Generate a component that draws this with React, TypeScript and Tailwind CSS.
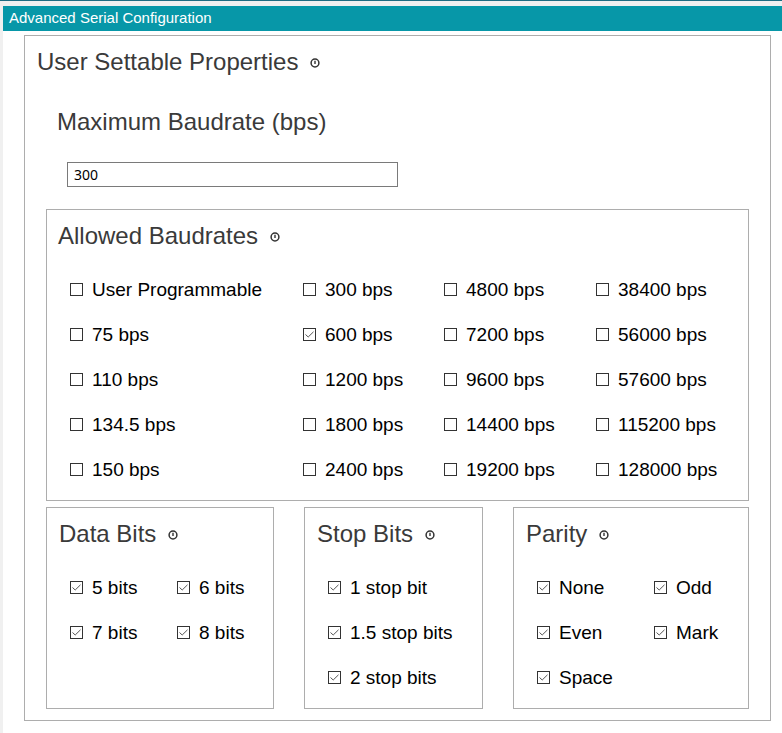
const sans = "font-['Liberation_Sans',Arial,sans-serif]";

function InfoIcon() {
  return (
    <svg width="10" height="10" viewBox="0 0 10 10" className="ml-3 inline-block shrink-0 translate-y-[1px]">
      <circle cx="5" cy="5" r="3.9" fill="none" stroke="#333" strokeWidth="1.5" />
      <line x1="5" y1="2.8" x2="5" y2="6" stroke="#333" strokeWidth="1.4" />
    </svg>
  );
}

function Heading({ text }: { text: string }) {
  return (
    <div className="flex h-[28px] items-center text-[24px] leading-[28px] text-[#3a3a3a]">
      <span>{text}</span>
      <InfoIcon />
    </div>
  );
}

function Check({ label, checked }: { label: string; checked?: boolean }) {
  return (
    <label className="flex h-[45px] items-center gap-[9px] text-[19px] leading-[22px] text-black">
      <span className="flex h-[13px] w-[13px] shrink-0 items-center justify-center border border-[#333] bg-white">
        {checked && (
          <svg width="11" height="11" viewBox="0 0 11 11">
            <path d="M1.5 5.5 L4.2 8 L9.5 2.8" fill="none" stroke="#555" strokeWidth="1" />
          </svg>
        )}
      </span>
      <span>{label}</span>
    </label>
  );
}

const baudCols = [
  ["User Programmable", "75 bps", "110 bps", "134.5 bps", "150 bps"],
  ["300 bps", "600 bps", "1200 bps", "1800 bps", "2400 bps"],
  ["4800 bps", "7200 bps", "9600 bps", "14400 bps", "19200 bps"],
  ["38400 bps", "56000 bps", "57600 bps", "115200 bps", "128000 bps"],
];

export default function App() {
  return (
    <div className={`flex h-[733px] w-[782px] flex-col bg-[#f0f0f0] ${sans}`}>
      <div className="h-px bg-[#1d6c82]" />
      <div className="h-[5px]" />
      <div className="ml-[3px] flex h-[25px] items-center bg-[#0797a8] pl-[6px] text-[15px] text-white">
        Advanced Serial Configuration
      </div>
      <div className="ml-[3px] flex-1 bg-white pl-[21px] pr-[11px] pt-[4px]">
        <div className="h-[686px] border border-[#adadad]">
          <div className="ml-[12px] mt-[12px]">
            <Heading text="User Settable Properties" />
          </div>
          <div className="ml-[32px] mt-[32px] h-[28px] text-[24px] leading-[28px] text-[#3a3a3a]">
            Maximum Baudrate (bps)
          </div>
          <div className="ml-[42px] mt-[26px] flex h-[25px] w-[331px] items-center border border-[#7a7a7a] px-[6px] font-['Noto_Sans',sans-serif] text-[14px] text-black">
            300
          </div>

          <div className="ml-[21px] mt-[22px] w-[703px] border border-[#adadad] pb-[8px] pl-[11px] pt-[12px]">
            <Heading text="Allowed Baudrates" />
            <div className="mt-[17px] grid grid-cols-[233px_141px_152px_1fr] pl-[12px]">
              {baudCols.map((col, ci) => (
                <div key={ci} className="flex flex-col">
                  {col.map((b) => (
                    <Check key={b} label={b} checked={b === "600 bps"} />
                  ))}
                </div>
              ))}
            </div>
          </div>

          <div className="ml-[21px] mt-[6px] flex gap-[30px]">
            <div className="h-[202px] w-[228px] border border-[#adadad] pl-[12px] pt-[12px]">
              <Heading text="Data Bits" />
              <div className="mt-[17px] grid grid-cols-[107px_1fr] pl-[11px]">
                <Check label="5 bits" checked />
                <Check label="6 bits" checked />
                <Check label="7 bits" checked />
                <Check label="8 bits" checked />
              </div>
            </div>
            <div className="h-[202px] w-[179px] border border-[#adadad] pl-[12px] pt-[12px]">
              <Heading text="Stop Bits" />
              <div className="mt-[17px] flex flex-col pl-[11px]">
                <Check label="1 stop bit" checked />
                <Check label="1.5 stop bits" checked />
                <Check label="2 stop bits" checked />
              </div>
            </div>
            <div className="h-[202px] w-[236px] border border-[#adadad] pl-[12px] pt-[12px]">
              <Heading text="Parity" />
              <div className="mt-[17px] grid grid-cols-[117px_1fr] pl-[11px]">
                <Check label="None" checked />
                <Check label="Odd" checked />
                <Check label="Even" checked />
                <Check label="Mark" checked />
                <Check label="Space" checked />
              </div>
            </div>
          </div>
        </div>
      </div>
    </div>
  );
}
